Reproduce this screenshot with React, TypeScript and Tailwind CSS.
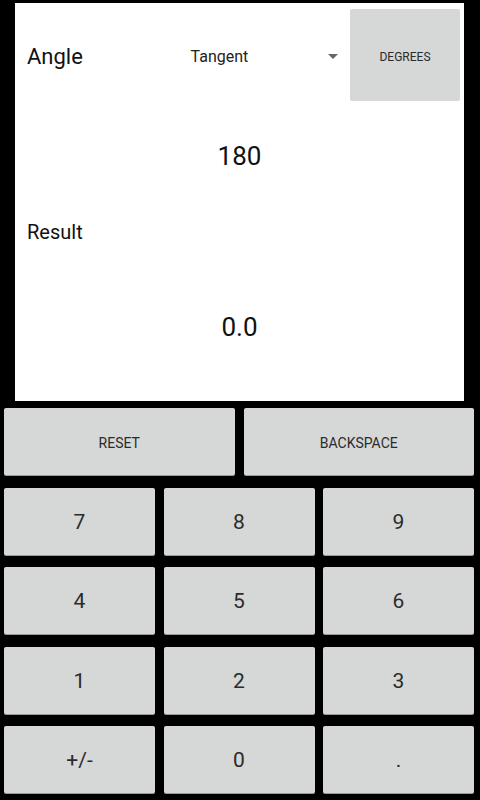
import React from 'react';

const KEYS = ['7', '8', '9', '4', '5', '6', '1', '2', '3', '+/-', '0', '.'];

const Key: React.FC<{ label: string; small?: boolean }> = ({ label, small }) => (
  <button
    className={
      'h-[67px] pt-[3px] rounded-[2px] bg-[#d6d7d7] text-[#2b2b2b] flex items-center justify-center shadow-[0_1px_0_#9a9a9a] ' +
      (small ? 'text-[14px]' : 'text-[21px]')
    }
  >
    {label}
  </button>
);

export default function App() {
  return (
    <div
      className="w-[480px] h-[800px] bg-black flex flex-col overflow-hidden"
      style={{ fontFamily: 'Roboto, "Noto Sans", sans-serif' }}
    >
      <div className="ml-[15px] mr-[16px] mt-[3px] h-[398px] bg-white flex flex-col">
        <div className="flex items-center pt-[6px] pr-[4px]">
          <span className="ml-[12px] pt-[3px] text-[22px] text-[#111]">Angle</span>
          <div className="flex-1 flex items-center ml-[20px] pt-[3px]">
            <span className="flex-1 text-center text-[16px] text-[#222] pl-[8px]">Tangent</span>
            <svg width="10" height="6" viewBox="0 0 10 6" className="mr-[12px]">
              <path d="M0 0 L10 0 L5 5 Z" fill="#666" />
            </svg>
          </div>
          <button className="w-[110px] h-[92px] pt-[3px] rounded-[2px] bg-[#d6d7d7] text-[12px] text-[#2b2b2b]">
            DEGREES
          </button>
        </div>
        <div className="mt-[39px] text-center text-[26px] text-[#111] leading-[32px]">180</div>
        <div className="mt-[48px] ml-[12px] text-[20px] text-[#111] leading-[24px]">Result</div>
        <div className="mt-[67px] text-center text-[26px] text-[#111] leading-[32px]">0.0</div>
      </div>

      <div className="mt-[7px] ml-[4px] mr-[6px] flex flex-col gap-[12.5px]">
        <div className="grid grid-cols-2 gap-x-[9px]">
          <Key label="RESET" small />
          <Key label="BACKSPACE" small />
        </div>
        <div className="grid grid-cols-3 gap-x-[8.5px] gap-y-[12.5px]">
          {KEYS.map((k) => (
            <Key key={k} label={k} />
          ))}
        </div>
      </div>
    </div>
  );
}
